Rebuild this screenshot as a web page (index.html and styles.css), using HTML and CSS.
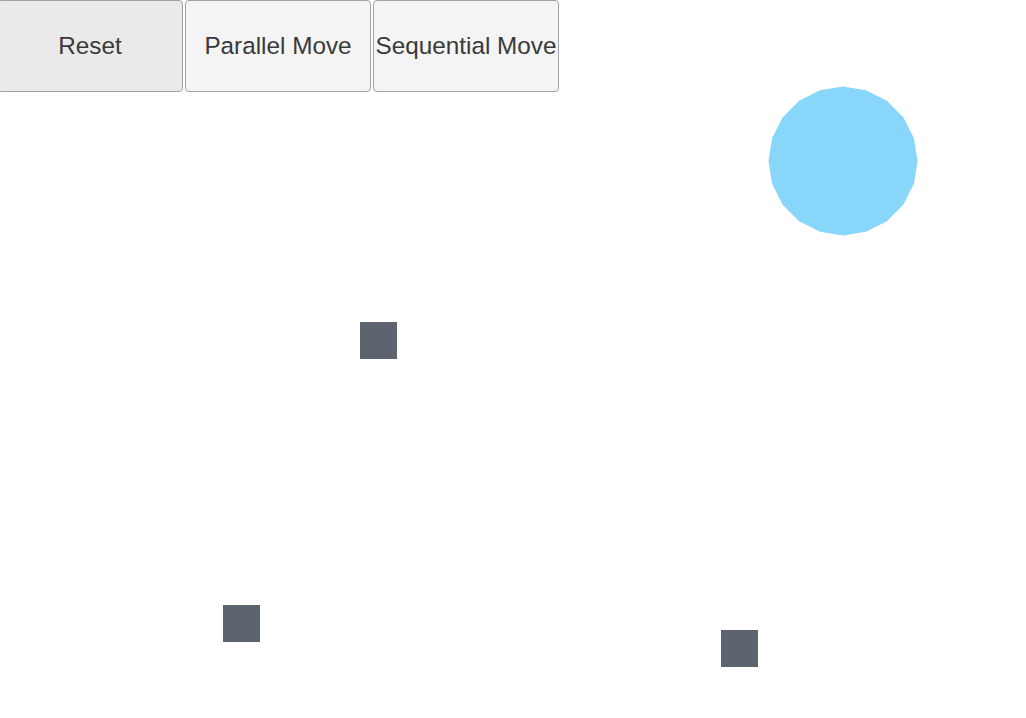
FILE: index.html
```html
<!DOCTYPE html>
<html>
<head>
<meta charset="utf-8">
<link rel="stylesheet" href="styles.css">
</head>
<body>
<div class="stage">
  <div class="toolbar">
    <button class="btn btn-hover">Reset</button>
    <button class="btn">Parallel Move</button>
    <button class="btn">Sequential Move</button>
  </div>
  <svg class="ball" width="150" height="150" viewBox="0 0 150 150">
    <polygon fill="#89d6fb" points="75,0.5 98.02,4.14 118.79,14.73 135.27,31.21 145.86,51.98 149.5,75 145.86,98.02 135.27,118.79 118.79,135.27 98.02,145.86 75,149.5 51.98,145.86 31.21,135.27 14.73,118.79 4.14,98.02 0.5,75 4.14,51.98 14.73,31.21 31.21,14.73 51.98,4.14"/>
  </svg>
  <div class="box box-1"></div>
  <div class="box box-2"></div>
  <div class="box box-3"></div>
</div>
</body>
</html>
```

FILE: styles.css
```css
html, body {
  margin: 0;
  padding: 0;
  background: #ffffff;
  overflow: hidden;
}
.stage {
  position: relative;
  width: 1026px;
  height: 718px;
  overflow: hidden;
}
.toolbar {
  display: flex;
  gap: 2px;
  margin-left: -3px;
}
.btn {
  width: 186px;
  height: 92px;
  box-sizing: border-box;
  border: 1px solid #a3a3a3;
  border-radius: 4px;
  background: #f4f4f4;
  color: #3a3a3a;
  font-family: "Liberation Sans", Arial, sans-serif;
  font-size: 24.3px;
  padding: 0;
  margin: 0;
  white-space: nowrap;
  overflow: visible;
}
.btn-hover {
  background: #eaeaea;
}
.ball {
  position: absolute;
  left: 768px;
  top: 86px;
}
.box {
  position: absolute;
  width: 37px;
  height: 37px;
  background: #5e6370;
}
.box-1 { left: 360px; top: 322px; }
.box-2 { left: 223px; top: 605px; }
.box-3 { left: 721px; top: 630px; }
```
